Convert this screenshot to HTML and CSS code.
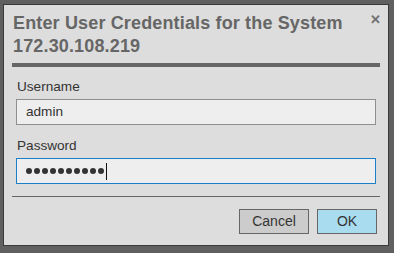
FILE: index.html
```html
<!DOCTYPE html>
<html>
<head>
<meta charset="utf-8">
<link rel="stylesheet" href="styles.css">
</head>
<body>
<div class="dialog">
  <div class="title">Enter User Credentials for the System 172.30.108.219</div>
  <span class="close">&#x2715;</span>
  <div class="rule"></div>
  <div class="form">
    <div class="label">Username</div>
    <div class="input">admin</div>
    <div class="label label2">Password</div>
    <div class="input focused"><span class="dot"></span><span class="dot"></span><span class="dot"></span><span class="dot"></span><span class="dot"></span><span class="dot"></span><span class="dot"></span><span class="dot"></span><span class="dot"></span><span class="dot"></span><span class="caret"></span></div>
  </div>
  <div class="sep"></div>
  <div class="buttons">
    <div class="btn cancel">Cancel</div>
    <div class="btn ok">OK</div>
  </div>
</div>
</body>
</html>
```
FILE: styles.css
```css
html, body {
  margin: 0;
  padding: 0;
  background: #606060;
  font-family: "Liberation Sans", Arial, sans-serif;
}
body {
  padding: 4px 0 0 3px;
}
.dialog {
  position: relative;
  box-sizing: border-box;
  width: 386px;
  height: 242px;
  background: #dddddd;
  border: 1px solid #3a3a3a;
}
.title {
  padding: 7px 40px 0 9px;
  font-size: 18px;
  font-weight: bold;
  line-height: 23px;
  letter-spacing: 0.15px;
  color: #666666;
  height: 46px;
}
.close {
  position: absolute;
  top: 7px;
  right: 7px;
  font-size: 13px;
  font-weight: bold;
  color: #707070;
}
.rule {
  margin: 5px 8px 0 8px;
  height: 4px;
  background: #666666;
}
.form {
  padding: 11px 12px 0 12px;
}
.label {
  font-size: 13.6px;
  line-height: 17px;
  color: #333333;
  padding-left: 1px;
  margin-bottom: 4px;
}
.label2 {
  margin-top: 12px;
}
.input {
  box-sizing: border-box;
  height: 26px;
  border: 1px solid #8f8f8f;
  background: #eeeeee;
  padding-left: 9px;
  font-size: 13.6px;
  line-height: 24px;
  color: #333333;
  display: flex;
  align-items: center;
}
.input.focused {
  border-color: #1a7fc9;
}
.dot {
  width: 6px;
  height: 6px;
  border-radius: 50%;
  background: #333333;
  margin-right: 2px;
}
.caret {
  width: 1px;
  height: 17px;
  background: #111;
  margin-left: 0;
}
.sep {
  margin: 12px 8px 0 8px;
  height: 1px;
  background: #666666;
}
.buttons {
  display: flex;
  justify-content: flex-end;
  gap: 8px;
  padding: 12px 11px 0 0;
}
.btn {
  box-sizing: border-box;
  height: 25px;
  border: 1px solid #666666;
  font-size: 14px;
  line-height: 23px;
  text-align: center;
  color: #333333;
}
.cancel {
  width: 70px;
  background: #cccccc;
}
.ok {
  width: 60px;
  background: #aadcef;
}
```
